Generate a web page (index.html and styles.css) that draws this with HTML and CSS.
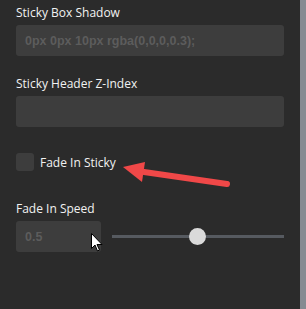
FILE: index.html
```html
<!DOCTYPE html>
<html lang="en">
<head>
  <meta charset="UTF-8" />
  <title>Sticky Settings</title>
  <link rel="stylesheet" href="styles.css">
</head>
<body>
  <div class="panel">
    <div class="field">
      <label class="label">Sticky Box Shadow</label>
      <input class="text-input" type="text" placeholder="0px 0px 10px rgba(0,0,0,0.3);" />
    </div>

    <div class="field">
      <label class="label">Sticky Header Z-Index</label>
      <input class="text-input" type="text" />
    </div>

    <div class="check-row">
      <span class="checkbox"></span>
      <span class="check-label">Fade In Sticky</span>
    </div>

    <div class="field">
      <label class="label">Fade In Speed</label>
      <div class="range-row">
        <input class="number-input" type="text" placeholder="0.5" />
        <div class="track">
          <div class="thumb"></div>
        </div>
      </div>
    </div>

    <!-- annotation arrow -->
    <svg class="arrow" width="120" height="30" viewBox="0 0 120 30">
      <path d="M107 21 L24 9" stroke="#f04848" stroke-width="6" stroke-linecap="round" />
      <polygon points="3,4 25,-1 22,19" fill="#f04848" />
    </svg>

    <!-- mouse pointer -->
    <svg class="pointer" width="12" height="19" viewBox="0 0 12 19">
      <path d="M0.5 0.5 L0.5 15.5 L4 12 L6.5 18 L8.5 17 L6 11.5 L11 11.5 Z" fill="#fff" stroke="#000" stroke-width="1" />
    </svg>
  </div>
  <div class="scroll-edge"></div>
</body>
</html>
```

FILE: styles.css
```css
body {
  margin: 0;
  background-color: #2b2b2b;
  font-family: "Open Sans", "Noto Sans", sans-serif;
  font-size: 12px;
  display: flex;
  height: 309px;
  overflow: hidden;
}

.panel {
  position: relative;
  flex: 1;
  padding: 5px 16px 0 16px;
}

.scroll-edge {
  width: 6px;
  background-color: #868b92;
}

.field {
  margin-bottom: 20px;
}

.label {
  display: block;
  color: #f2f2f2;
  line-height: 16px;
  margin-bottom: 4px;
}

.text-input,
.number-input {
  box-sizing: border-box;
  height: 31px;
  border: none;
  border-radius: 3px;
  background-color: #3d3d3d;
  padding: 0 9px;
  font-family: "Liberation Sans", Arial, sans-serif;
  font-size: 12.5px;
  font-weight: 700;
  color: #5e5e5e;
  outline: none;
}

.text-input {
  width: 268px;
}

.text-input::placeholder,
.number-input::placeholder {
  color: #5c5c5c;
}

.check-row {
  display: flex;
  align-items: center;
  gap: 6px;
  margin: 26px 0 30px 0;
}

.checkbox {
  width: 18px;
  height: 18px;
  border-radius: 3px;
  background-color: #3d3d3d;
}

.check-label {
  color: #f2f2f2;
}

.range-row {
  display: flex;
  align-items: center;
  gap: 11px;
}

.number-input {
  width: 85px;
}

.track {
  position: relative;
  width: 172px;
  height: 3px;
  background-color: #565a60;
}

.thumb {
  position: absolute;
  left: 77px;
  top: -7px;
  width: 17px;
  height: 17px;
  border-radius: 50%;
  background-color: #dadada;
}

.arrow {
  position: absolute;
  left: 120px;
  top: 163px;
  overflow: visible;
}

.pointer {
  position: absolute;
  left: 91px;
  top: 233px;
}
```
